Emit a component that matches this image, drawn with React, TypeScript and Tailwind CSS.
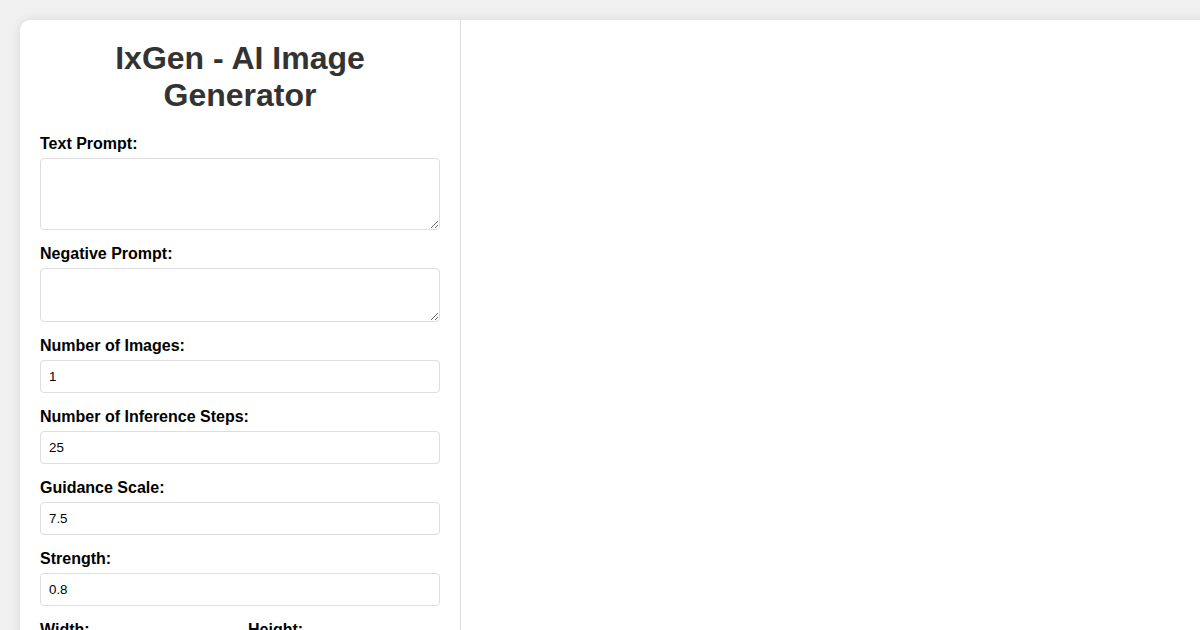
import React from "react";

const fields = [
  { label: "Number of Images:", value: "1" },
  { label: "Number of Inference Steps:", value: "25" },
  { label: "Guidance Scale:", value: "7.5" },
  { label: "Strength:", value: "0.8" },
];

const labelCls = "mb-[5px] block text-base font-bold leading-[18px] text-black";
const inputCls =
  "block h-[33px] w-full rounded-[4px] border border-[#ddd] bg-white px-2 text-[13.33px] text-black outline-none";

export default function App() {
  return (
    <div
      className="h-[630px] w-full overflow-hidden bg-[#f0f0f0] pl-5 pt-5"
      style={{ fontFamily: "'Liberation Sans', Arial, sans-serif" }}
    >
      <div className="flex h-[700px] w-[1240px] shrink-0 rounded-[10px] bg-white shadow-[0_0_10px_rgba(0,0,0,0.1)]">
        {/* Controls */}
        <div className="w-[441px] shrink-0 border-r border-[#ddd] p-5">
          <h1 className="mb-[21px] text-center text-[32px] font-bold leading-[37px] text-[#333]">
            IxGen - AI Image Generator
          </h1>

          <div className="mb-[15px]">
            <label className={labelCls}>Text Prompt:</label>
            <textarea className="block h-[72px] w-full rounded-[4px] border border-[#ddd] p-2 text-[13.33px] outline-none" />
          </div>

          <div className="mb-[15px]">
            <label className={labelCls}>Negative Prompt:</label>
            <textarea className="block h-[54px] w-full rounded-[4px] border border-[#ddd] p-2 text-[13.33px] outline-none" />
          </div>

          {fields.map((f) => (
            <div key={f.label} className="mb-[15px]">
              <label className={labelCls}>{f.label}</label>
              <input type="text" defaultValue={f.value} className={inputCls} />
            </div>
          ))}

          <div className="flex gap-4">
            <div className="flex-1">
              <label className={labelCls}>Width:</label>
              <input type="text" defaultValue="512" className={inputCls} />
            </div>
            <div className="flex-1">
              <label className={labelCls}>Height:</label>
              <input type="text" defaultValue="512" className={inputCls} />
            </div>
          </div>
        </div>

        {/* Output area */}
        <div className="flex-1" />
      </div>
    </div>
  );
}
